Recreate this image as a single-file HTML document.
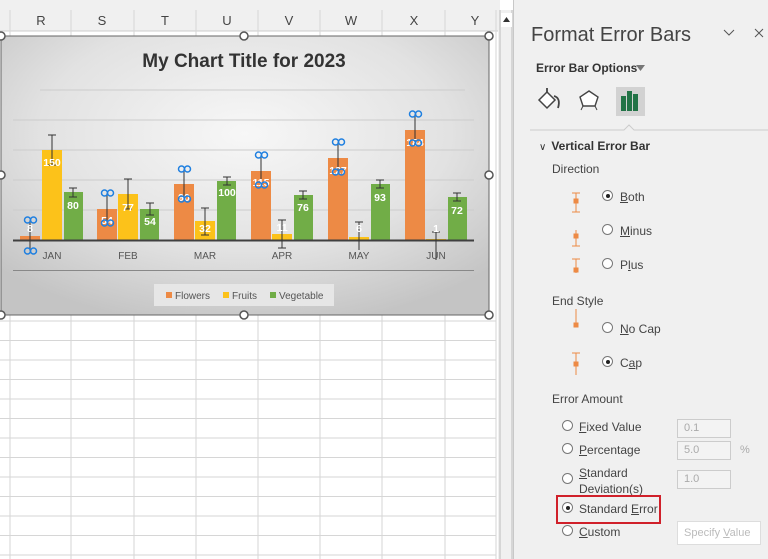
<!DOCTYPE html><html><head><meta charset="utf-8"><style>
body{margin:0;width:768px;height:559px;overflow:hidden;background:#fff;font-family:"Liberation Sans",sans-serif;position:relative}
.a{position:absolute;white-space:nowrap}
.p{color:#444;font-size:12px}
.r{position:absolute;width:11px;height:11px;border:1px solid #777;border-radius:50%;background:#fff;box-sizing:border-box}
.r.on::after{content:"";position:absolute;left:2.5px;top:2.5px;width:4px;height:4px;border-radius:50%;background:#222}
.in{position:absolute;border:1px solid #ccc;background:#f3f3f3;color:#aaa;font-size:11px;box-sizing:border-box;padding:2px 6px}
</style></head><body>
<svg class="a" style="left:0;top:0" width="513" height="559">
<rect width="513" height="559" fill="#fff"/>
<rect x="0" y="0" width="500" height="31" fill="#f0f0f0"/>
<line x1="0" y1="31" x2="500" y2="31" stroke="#ccc"/>
<g stroke="#d6d6d6">
<line x1="10" y1="10" x2="10" y2="559"/><line x1="71" y1="10" x2="71" y2="559"/><line x1="134" y1="10" x2="134" y2="559"/><line x1="196" y1="10" x2="196" y2="559"/><line x1="258" y1="10" x2="258" y2="559"/><line x1="320" y1="10" x2="320" y2="559"/><line x1="382" y1="10" x2="382" y2="559"/><line x1="445" y1="10" x2="445" y2="559"/><line x1="496" y1="10" x2="496" y2="559"/>
<line x1="0" y1="321" x2="496" y2="321"/><line x1="0" y1="340.5" x2="496" y2="340.5"/><line x1="0" y1="360" x2="496" y2="360"/><line x1="0" y1="379.5" x2="496" y2="379.5"/><line x1="0" y1="399" x2="496" y2="399"/><line x1="0" y1="418.5" x2="496" y2="418.5"/><line x1="0" y1="438" x2="496" y2="438"/><line x1="0" y1="457.5" x2="496" y2="457.5"/><line x1="0" y1="477" x2="496" y2="477"/><line x1="0" y1="496.5" x2="496" y2="496.5"/><line x1="0" y1="516" x2="496" y2="516"/><line x1="0" y1="535.5" x2="496" y2="535.5"/><line x1="0" y1="555" x2="496" y2="555"/>
</g>
<rect x="498" y="10" width="15" height="549" fill="#f0f0f0"/><line x1="500" y1="10" x2="500" y2="559" stroke="#bbb"/><line x1="512" y1="10" x2="512" y2="559" stroke="#bbb"/>
<rect x="501" y="13" width="11" height="14" fill="#fff"/><path d="M503 22 L506.5 17 L510 22Z" fill="#333"/>
<g font-size="13" fill="#444" text-anchor="middle"><text x="41" y="25">R</text><text x="102" y="25">S</text><text x="165" y="25">T</text><text x="227" y="25">U</text><text x="289" y="25">V</text><text x="351" y="25">W</text><text x="414" y="25">X</text><text x="475" y="25">Y</text></g>
<defs><radialGradient id="g" cx="50%" cy="35%" r="70%"><stop offset="0" stop-color="#f7f7f7"/><stop offset="0.6" stop-color="#e2e2e2"/><stop offset="1" stop-color="#c4c4c4"/></radialGradient></defs>
<rect x="1" y="36" width="488" height="279" fill="url(#g)" stroke="#666"/>
<text x="244" y="67" font-size="19" font-weight="bold" fill="#333" text-anchor="middle">My Chart Title for 2023</text>
<g stroke="#ccc"><line x1="40" y1="90" x2="465" y2="90"/><line x1="13" y1="120" x2="474" y2="120"/><line x1="13" y1="150" x2="474" y2="150"/><line x1="13" y1="180" x2="474" y2="180"/><line x1="13" y1="210" x2="474" y2="210"/></g>
<g fill="#ed8a45"><rect x="20" y="236" width="20" height="4"/><rect x="97" y="209" width="20" height="31"/><rect x="174" y="184" width="20" height="56"/><rect x="251" y="171" width="20" height="69"/><rect x="328" y="158" width="20" height="82"/><rect x="405" y="130" width="20" height="110"/></g>
<g fill="#fcc21a"><rect x="42" y="150" width="20" height="90"/><rect x="118" y="194" width="20" height="46"/><rect x="195" y="221" width="20" height="19"/><rect x="272" y="234" width="20" height="6"/><rect x="349" y="237" width="20" height="3"/><rect x="426" y="239" width="20" height="1"/></g>
<g fill="#71ad47"><rect x="64" y="192" width="19" height="48"/><rect x="140" y="209" width="19" height="31"/><rect x="217" y="181" width="19" height="59"/><rect x="294" y="195" width="19" height="45"/><rect x="371" y="184" width="19" height="56"/><rect x="448" y="197" width="19" height="43"/></g>
<line x1="13" y1="240.5" x2="474" y2="240.5" stroke="#404040" stroke-width="2"/>
<g stroke="#333" stroke-width="1"><path d="M52 135V165M48 135H56M48 165H56M128 179V209M124 179H132M124 209H132M205 208V235M201 208H209M201 235H209M282 220V248M278 220H286M278 248H286M359 222V250M355 222H363M436 232V260M432 232H440M73 188V197M69 188H77M69 197H77M150 203V215M146 203H154M146 215H154M227 177V185M223 177H231M223 185H231M303 191V199M299 191H307M299 199H307M380 180V188M376 180H384M376 188H384M457 193V201M453 193H461M453 201H461M30 220V251M107 193V223M184 169V199M261 155V185M338 142V172M415 114V143"/></g>
<g font-size="10.5" font-weight="bold" fill="#fff" text-anchor="middle"><text x="30" y="232">8</text><text x="52" y="166">150</text><text x="73" y="209">80</text><text x="107" y="224">54</text><text x="128" y="211">77</text><text x="150" y="225">54</text><text x="184" y="201">90</text><text x="205" y="232">32</text><text x="227" y="196">100</text><text x="261" y="186">115</text><text x="282" y="231">11</text><text x="303" y="211">76</text><text x="338" y="174">127</text><text x="359" y="232">6</text><text x="380" y="201">93</text><text x="415" y="146">184</text><text x="436" y="232">1</text><text x="457" y="214">72</text></g>
<g fill="none" stroke="#1e7fe0" stroke-width="1.5"><circle cx="27.5" cy="220" r="3"/><circle cx="33.5" cy="220" r="3"/><circle cx="27.5" cy="251" r="3"/><circle cx="33.5" cy="251" r="3"/><circle cx="104.5" cy="193" r="3"/><circle cx="110.5" cy="193" r="3"/><circle cx="104.5" cy="223" r="3"/><circle cx="110.5" cy="223" r="3"/><circle cx="181.5" cy="169" r="3"/><circle cx="187.5" cy="169" r="3"/><circle cx="181.5" cy="199" r="3"/><circle cx="187.5" cy="199" r="3"/><circle cx="258.5" cy="155" r="3"/><circle cx="264.5" cy="155" r="3"/><circle cx="258.5" cy="185" r="3"/><circle cx="264.5" cy="185" r="3"/><circle cx="335.5" cy="142" r="3"/><circle cx="341.5" cy="142" r="3"/><circle cx="335.5" cy="172" r="3"/><circle cx="341.5" cy="172" r="3"/><circle cx="412.5" cy="114" r="3"/><circle cx="418.5" cy="114" r="3"/><circle cx="412.5" cy="143" r="3"/><circle cx="418.5" cy="143" r="3"/></g>
<g font-size="10" fill="#555" text-anchor="middle"><text x="52" y="259">JAN</text><text x="128" y="259">FEB</text><text x="205" y="259">MAR</text><text x="282" y="259">APR</text><text x="359" y="259">MAY</text><text x="436" y="259">JUN</text></g>
<line x1="13" y1="270.5" x2="474" y2="270.5" stroke="#888"/>
<rect x="154" y="284" width="180" height="22" fill="#e6e6e6"/>
<g font-size="10" fill="#555"><rect x="166" y="292" width="6" height="6" fill="#ed8a45"/><text x="175" y="299">Flowers</text><rect x="223" y="292" width="6" height="6" fill="#fcc21a"/><text x="232" y="299">Fruits</text><rect x="270" y="292" width="6" height="6" fill="#71ad47"/><text x="279" y="299">Vegetable</text></g>
<g fill="#fff" stroke="#555" stroke-width="1.5"><circle cx="1" cy="36" r="4"/><circle cx="244" cy="36" r="4"/><circle cx="489" cy="36" r="4"/><circle cx="1" cy="175" r="4"/><circle cx="489" cy="175" r="4"/><circle cx="1" cy="315" r="4"/><circle cx="244" cy="315" r="4"/><circle cx="489" cy="315" r="4"/></g>
</svg>
<div class="a" style="left:513px;top:0;width:255px;height:559px;background:#f0f0f0;border-left:1px solid #c8c8c8"></div>
<div class="a" style="left:531px;top:24px;font-size:20px;color:#444">Format Error Bars</div>
<svg class="a" style="left:722px;top:27px" width="46" height="14"><path d="M2 3L7 8L12 3" stroke="#555" fill="none"/><path d="M33 2L41 10M41 2L33 10" stroke="#555" fill="none"/></svg>
<div class="a" style="left:536px;top:61px;font-size:12px;font-weight:bold;color:#333">Error Bar Options</div>
<svg class="a" style="left:636px;top:65px" width="10" height="7"><path d="M0 0H9L4.5 6Z" fill="#777"/></svg>
<div class="a" style="left:616px;top:87px;width:29px;height:29px;background:#d2d2d2"></div>
<svg class="a" style="left:530px;top:86px" width="238" height="50">
<path d="M9 14L17 6L25 14L17 22Z" fill="#fff" stroke="#444" stroke-width="1.5"/><path d="M17 6V2M24 10Q31 12 28 22" stroke="#444" stroke-width="1.8" fill="none"/>
<path d="M59 5L68 11L65 20H53L50 11Z" fill="#fff" stroke="#444" stroke-width="1.4"/><path d="M53 20L51 24M65 20L67 24" stroke="#444"/>
<rect x="91" y="10" width="5" height="15" fill="#217346"/><rect x="97" y="5" width="5" height="20" fill="#217346"/><rect x="103" y="8" width="5" height="17" fill="#217346"/>
<path d="M0 44H94L99 39L104 44H238" stroke="#ccc" fill="none"/>
</svg>
<div class="a" style="left:539px;top:139px;font-size:12px;font-weight:bold;color:#333"><span style="font-weight:normal;font-size:10px;margin-right:5px">&#8744;</span>Vertical Error Bar</div>
<div class="a p" style="left:552px;top:162px">Direction</div>
<svg class="a" style="left:568px;top:190px" width="20" height="190" stroke="#ed8a45" fill="#ed8a45">
<path d="M4 3H12M8 3V22M4 22H12"/><rect x="6" y="9" width="4" height="4"/>
<path d="M8 40V56M4 56H12"/><rect x="6" y="44" width="4" height="4"/>
<path d="M4 69H12M8 69V83"/><rect x="6" y="78" width="4" height="4"/>
<path d="M8 119V137"/><rect x="6" y="133" width="4" height="4"/>
<path d="M4 163H12M8 163V185"/><rect x="6" y="172" width="4" height="4"/>
</svg>
<div class="r on" style="left:602px;top:190px"></div><div class="a p" style="left:620px;top:190px"><u>B</u>oth</div>
<div class="r" style="left:602px;top:224px"></div><div class="a p" style="left:620px;top:224px"><u>M</u>inus</div>
<div class="r" style="left:602px;top:258px"></div><div class="a p" style="left:620px;top:258px">P<u>l</u>us</div>
<div class="a p" style="left:552px;top:294px">End Style</div>
<div class="r" style="left:602px;top:322px"></div><div class="a p" style="left:620px;top:322px"><u>N</u>o Cap</div>
<div class="r on" style="left:602px;top:356px"></div><div class="a p" style="left:620px;top:356px">C<u>a</u>p</div>
<div class="a p" style="left:552px;top:392px">Error Amount</div>
<div class="r" style="left:562px;top:420px"></div><div class="a p" style="left:579px;top:420px"><u>F</u>ixed Value</div>
<div class="in" style="left:677px;top:419px;width:54px;height:19px">0.1</div>
<div class="r" style="left:562px;top:443px"></div><div class="a p" style="left:579px;top:443px"><u>P</u>ercentage</div>
<div class="in" style="left:677px;top:441px;width:54px;height:19px">5.0</div><div class="a" style="left:740px;top:444px;font-size:11px;color:#aaa">%</div>
<div class="r" style="left:562px;top:473px"></div><div class="a p" style="left:579px;top:465px;line-height:16px"><u>S</u>tandard<br>Deviation(s)</div>
<div class="in" style="left:677px;top:470px;width:54px;height:19px">1.0</div>
<div class="a" style="left:556px;top:495px;width:101px;height:25px;border:2px solid #d0202a"></div>
<div class="r on" style="left:562px;top:502px"></div><div class="a p" style="left:579px;top:502px">Standard <u>E</u>rror</div>
<div class="r" style="left:562px;top:525px"></div><div class="a p" style="left:579px;top:525px"><u>C</u>ustom</div>
<div class="in" style="left:677px;top:521px;width:84px;height:24px;background:#fff;border-color:#ddd;padding-top:5px;color:#bbb">Specify <u>V</u>alue</div>
</body></html>
